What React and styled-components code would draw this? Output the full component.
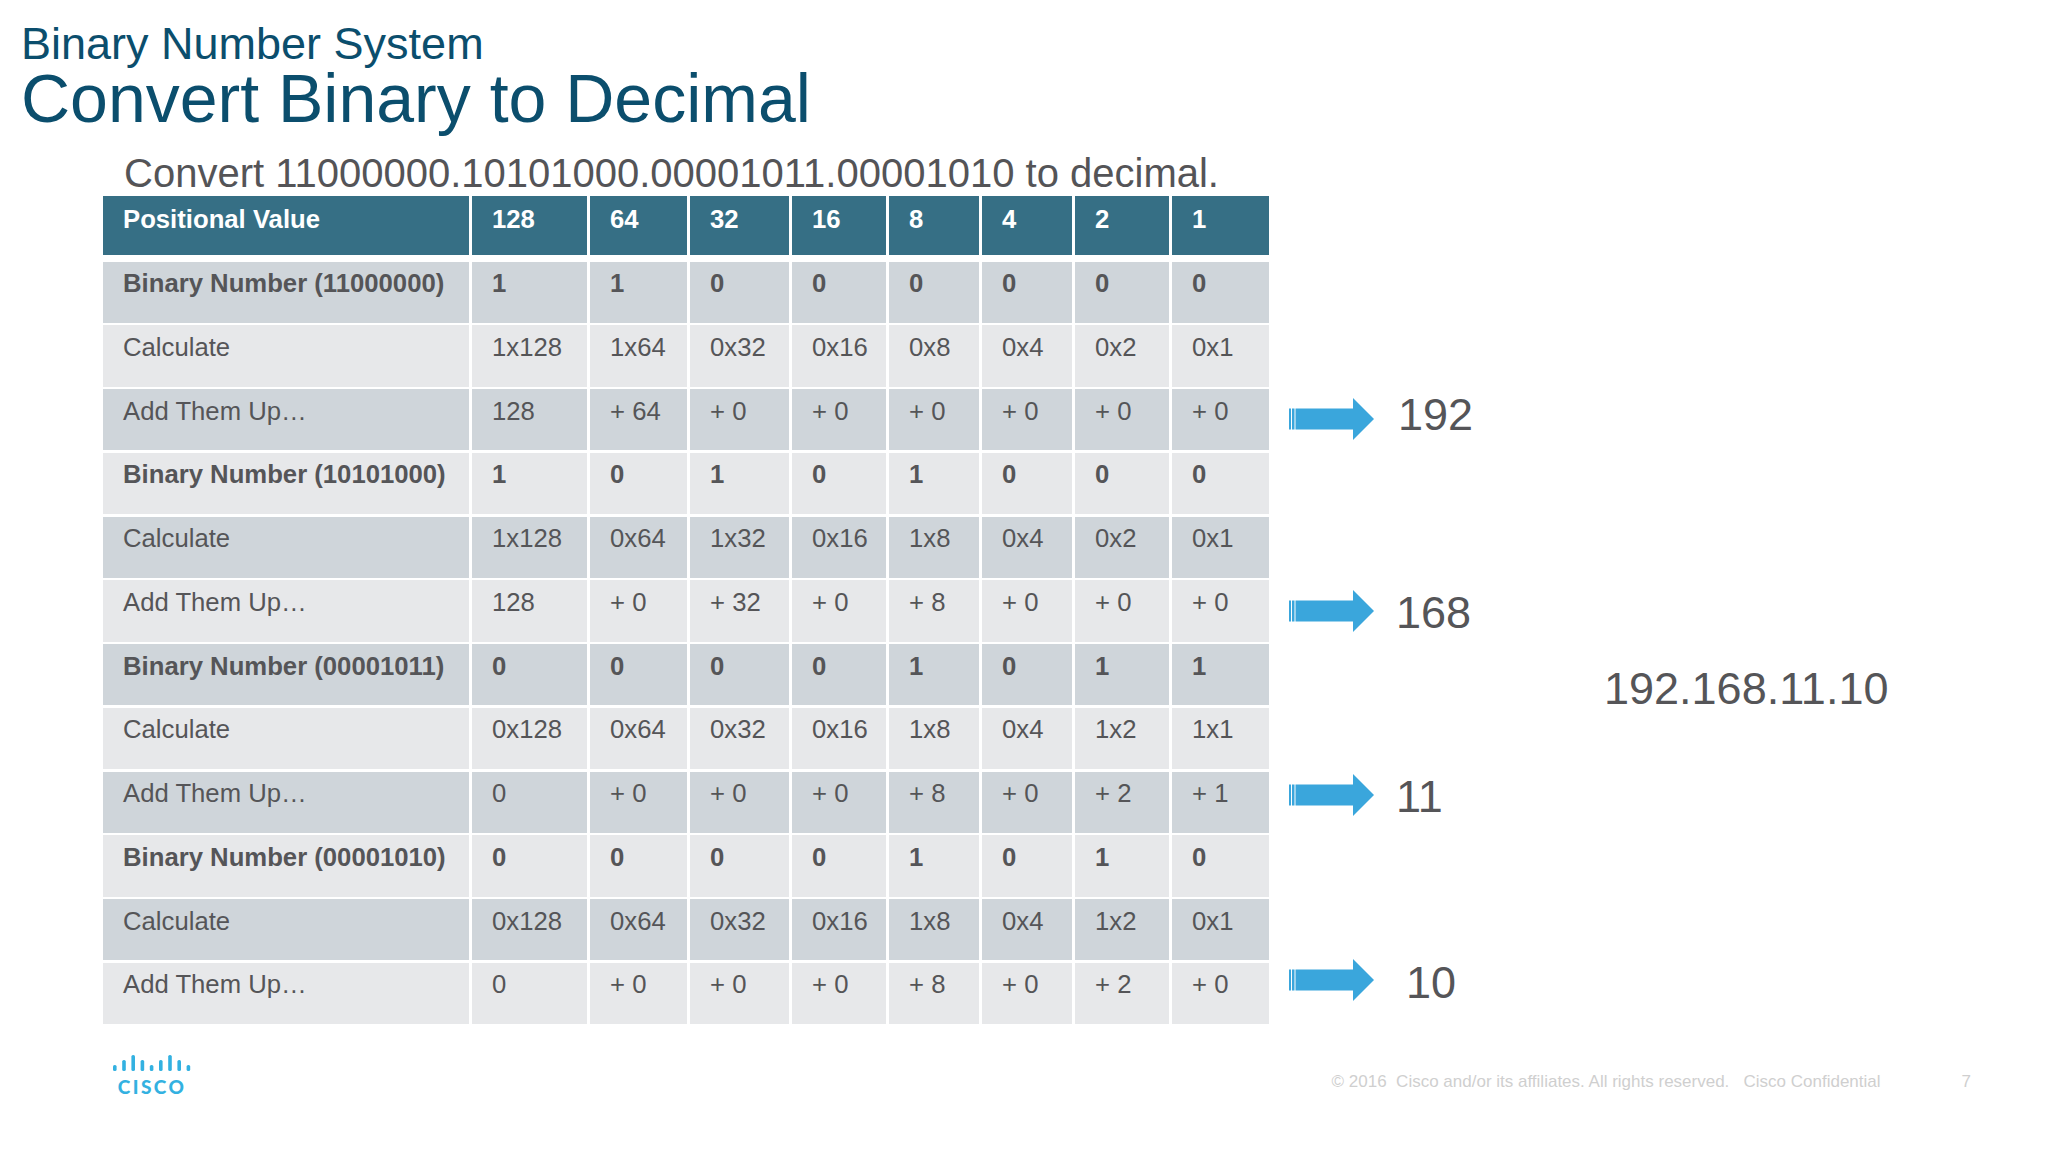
import React from 'react'
import styled, { createGlobalStyle } from 'styled-components'

const GlobalStyle = createGlobalStyle`
    html, body {
        margin: 0;
        padding: 0;
        background: #ffffff;
    }
    body {
        font-family: "Liberation Sans", Arial, sans-serif;
    }
`;

const Slide = styled.div`
    width: 2048px;
    height: 1152px;
    box-sizing: border-box;
    padding-top: 23px;
    background: #ffffff;
    display: flex;
    flex-direction: column;
    overflow: hidden;
`;

const TitleBlock = styled.header`
    padding-left: 21px;
    color: #0b4e6d;
`;

const SubTitle = styled.h2`
    margin: 0;
    font-weight: normal;
    font-size: 45px;
    line-height: 42px;
`;

const Title = styled.h1`
    margin: 1px 0 0 0;
    font-weight: normal;
    font-size: 68px;
    line-height: 64px;
`;

const Prompt = styled.p`
    margin: 23px 0 0 124px;
    font-size: 40px;
    line-height: 1;
    color: #545457;
`;

const Board = styled.div`
    margin: 3px 0 0 103px;
    display: grid;
    grid-template-columns: 366px 115px 97px 99px 94px 90px 90px 94px 97px 329px auto;
    grid-template-rows: 63px;
    grid-auto-rows: 61.25px;
    column-gap: 3px;
    row-gap: 2.5px;
`;

const tones = {
    head: '#366f85',
    dark: '#cfd5da',
    light: '#e7e8ea'
};

const Cell = styled.div`
    box-sizing: border-box;
    background: ${props => tones[props.$tone]};
    color: ${props => props.$tone === 'head' ? '#ffffff' : '#555558'};
    font-weight: ${props => props.$bold ? 'bold' : 'normal'};
    font-size: 25.7px;
    line-height: 1;
    padding: ${props => props.$tone === 'head' ? '11px' : '9.5px'} 0 0 20px;
    white-space: nowrap;
    height: ${props => props.$tone === 'head' ? '59px' : 'auto'};
    align-self: ${props => props.$tone === 'head' ? 'start' : 'stretch'};
`;

const Note = styled.div`
    display: flex;
    align-items: center;
    padding-left: 16px;
    transform: translateY(${props => props.$dy || 0}px);
`;

const Sum = styled.span`
    margin-left: ${props => props.$gap}px;
    font-size: 45px;
    line-height: 1;
    color: #555558;
    transform: translateY(${props => props.$lift || 0}px);
`;

const Result = styled.div`
    grid-column: 11;
    grid-row: 1 / span 13;
    padding-top: 470px;
    font-size: 45px;
    line-height: 1;
    color: #555558;
    white-space: nowrap;
`;

const Footer = styled.footer`
    margin-top: auto;
    height: 98px;
    display: flex;
    align-items: flex-start;
    padding-left: 113px;
    padding-right: 77px;
`;

const Logo = styled.div`
    display: flex;
    flex-direction: column;
    align-items: center;
    width: 78px;
`;

const LogoWord = styled.span`
    margin-top: 6px;
    font-family: Lato, "Open Sans", sans-serif;
    font-weight: 900;
    font-size: 19px;
    line-height: 1;
    letter-spacing: 2.4px;
    color: #33b1e1;
`;

const Legal = styled.span`
    margin-left: auto;
    margin-top: 18px;
    font-size: 17px;
    color: #cfcfcf;
    white-space: pre;
`;

const PageNo = styled.span`
    margin-left: 81px;
    margin-top: 18px;
    font-size: 17px;
    color: #cfcfcf;
`;

const columns = ['128', '64', '32', '16', '8', '4', '2', '1'];

const rows = [
    { label: 'Binary Number (11000000)', bold: true, cells: ['1', '1', '0', '0', '0', '0', '0', '0'] },
    { label: 'Calculate', cells: ['1x128', '1x64', '0x32', '0x16', '0x8', '0x4', '0x2', '0x1'] },
    { label: 'Add Them Up…', cells: ['128', '+ 64', '+ 0', '+ 0', '+ 0', '+ 0', '+ 0', '+ 0'], sum: '192', dy: -1, lift: -4, gap: 24 },
    { label: 'Binary Number (10101000)', bold: true, cells: ['1', '0', '1', '0', '1', '0', '0', '0'] },
    { label: 'Calculate', cells: ['1x128', '0x64', '1x32', '0x16', '1x8', '0x4', '0x2', '0x1'] },
    { label: 'Add Them Up…', cells: ['128', '+ 0', '+ 32', '+ 0', '+ 8', '+ 0', '+ 0', '+ 0'], sum: '168', dy: 0, lift: 2, gap: 22 },
    { label: 'Binary Number (00001011)', bold: true, cells: ['0', '0', '0', '0', '1', '0', '1', '1'] },
    { label: 'Calculate', cells: ['0x128', '0x64', '0x32', '0x16', '1x8', '0x4', '1x2', '1x1'] },
    { label: 'Add Them Up…', cells: ['0', '+ 0', '+ 0', '+ 0', '+ 8', '+ 0', '+ 2', '+ 1'], sum: '11', dy: -7, lift: 1, gap: 22 },
    { label: 'Binary Number (00001010)', bold: true, cells: ['0', '0', '0', '0', '1', '0', '1', '0'] },
    { label: 'Calculate', cells: ['0x128', '0x64', '0x32', '0x16', '1x8', '0x4', '1x2', '0x1'] },
    { label: 'Add Them Up…', cells: ['0', '+ 0', '+ 0', '+ 0', '+ 8', '+ 0', '+ 2', '+ 0'], sum: '10', dy: -13, lift: 2, gap: 32 }
];

const Arrow = () => (
    <svg width="86" height="42" viewBox="0 0 86 42">
        <rect x="1" y="10.5" width="2" height="21" fill="#3aa6dc" />
        <rect x="4" y="10.5" width="2.5" height="21" fill="#3aa6dc" />
        <polygon points="7.5,10.5 65,10.5 65,0 86,21 65,42 65,31.5 7.5,31.5" fill="#3aa6dc" />
    </svg>
);

const CiscoBars = () => {
    const heights = [6, 11, 16, 11, 6, 11, 16, 11, 6];
    return (
        <svg width="78" height="17" viewBox="0 0 78 17">
            {heights.map((h, i) => (
                <rect key={i} x={i * 9.2} y={17 - h} width="3.6" height={h} rx="1.6" fill="#33b1e1" />
            ))}
        </svg>
    );
};

export default function App() {
    return (
        <>
            <GlobalStyle />
            <Slide>
                <TitleBlock>
                    <SubTitle>Binary Number System</SubTitle>
                    <Title>Convert Binary to Decimal</Title>
                </TitleBlock>
                <Prompt>Convert 11000000.10101000.00001011.00001010 to decimal.</Prompt>
                <Board>
                    <Cell $tone="head" $bold>Positional Value</Cell>
                    {columns.map(c => <Cell key={c} $tone="head" $bold>{c}</Cell>)}
                    <div />
                    <Result>192.168.11.10</Result>
                    {rows.map((row, r) => {
                        const tone = r % 2 === 0 ? 'dark' : 'light';
                        return (
                            <React.Fragment key={r}>
                                <Cell $tone={tone} $bold={row.bold}>{row.label}</Cell>
                                {row.cells.map((v, c) => (
                                    <Cell key={c} $tone={tone} $bold={row.bold}>{v}</Cell>
                                ))}
                                {row.sum ? (
                                    <Note $dy={row.dy}>
                                        <Arrow />
                                        <Sum $gap={row.gap} $lift={row.lift}>{row.sum}</Sum>
                                    </Note>
                                ) : <div />}
                            </React.Fragment>
                        );
                    })}
                </Board>
                <Footer>
                    <Logo>
                        <CiscoBars />
                        <LogoWord>CISCO</LogoWord>
                    </Logo>
                    <Legal>{'© 2016  Cisco and/or its affiliates. All rights reserved.   Cisco Confidential'}</Legal>
                    <PageNo>7</PageNo>
                </Footer>
            </Slide>
        </>
    );
}
